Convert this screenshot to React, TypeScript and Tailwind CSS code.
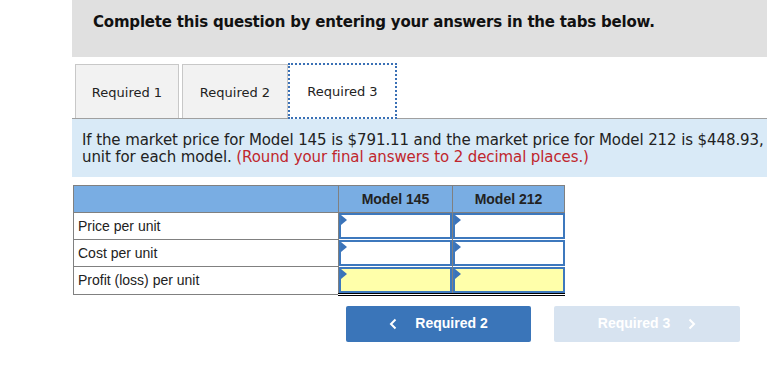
import React from 'react';

/**
 * Question tabs: header, tab strip, prompt and answer table
 */

const tahoma = { fontFamily: '"DejaVu Sans", Verdana, sans-serif' };
const arial = { fontFamily: '"Liberation Sans", Arial, sans-serif' };

const InputCell: React.FC<{ yellow?: boolean; last?: boolean }> = ({ yellow, last }) => (
  <td className={`p-0 border-l border-[#808080] ${last ? 'border-b-[3px] border-b-black border-double' : ''}`}>
    <div
      className={`relative h-[26px] border-2 border-[#3d78bd] ${yellow ? 'bg-[#ffffaa]' : 'bg-white'}`}
    >
      <span className="absolute left-0 top-0 w-0 h-0 border-t-[5px] border-b-[5px] border-l-[6px] border-t-transparent border-b-transparent border-l-[#3b73b9]" />
    </div>
  </td>
);

const rows = ['Price per unit', 'Cost per unit', 'Profit (loss) per unit'];

export default function App() {
  return (
    <div className="w-[767px] h-[385px] overflow-hidden bg-white">
      <div className="ml-[72px] w-[1000px]">
        {/* Header */}
        <div className="h-[57px] bg-[#e0e0e0] pl-[21px] pt-[11px]">
          <p className="text-[15px] font-bold text-[#111] tracking-[-0.2px]" style={tahoma}>
            Complete this question by entering your answers in the tabs below.
          </p>
        </div>

        {/* Tabs */}
        <div className="mt-[8px] flex items-end pl-[3px] border-b border-[#a0a0a0] h-[54px]">
          <div
            className="w-[104px] h-[54px] pt-[2px] flex items-center justify-center bg-[#f2f2f2] border border-b-0 border-[#c8c8c8] text-[13px] text-[#222]"
            style={tahoma}
          >
            Required 1
          </div>
          <div
            className="ml-[3px] w-[106px] h-[54px] pt-[2px] flex items-center justify-center bg-[#f2f2f2] border border-b-0 border-[#c8c8c8] text-[13px] text-[#222]"
            style={tahoma}
          >
            Required 2
          </div>
          <div
            className="w-[109px] h-[56px] -mb-px pt-[2px] flex items-center justify-center bg-white border-2 border-dotted border-[#3a70b5] text-[13px] text-[#222]"
            style={tahoma}
          >
            Required 3
          </div>
        </div>

        {/* Prompt */}
        <div className="h-[58px] bg-[#d9eaf7] pl-[10px] pt-[13px] text-[15px] leading-[17px] text-[#222] whitespace-nowrap tracking-[-0.1px]" style={tahoma}>
          <div>If the market price for Model 145 is $791.11 and the market price for Model 212 is $448.93, determine the profit or loss per</div>
          <div>
            unit for each model. <span className="text-[#c0262d]">(Round your final answers to 2 decimal places.)</span>
          </div>
        </div>

        {/* Answer table */}
        <table className="mt-[8px] ml-px border-collapse text-[13px] text-[#222]" style={arial}>
          <thead>
            <tr className="h-[27px] bg-[#79ade3]">
              <th className="w-[265px] border border-[#808080]" />
              <th className="w-[114px] border border-[#808080] font-bold text-[14px]">Model 145</th>
              <th className="w-[112px] border border-[#808080] font-bold text-[14px]">Model 212</th>
            </tr>
          </thead>
          <tbody>
            {rows.map((label, i) => (
              <tr key={label} className="h-[27px]">
                <td className="border border-[#808080] pl-[4px] text-left text-[14px]">{label}</td>
                <InputCell yellow={i === 2} last={i === 2} />
                <InputCell yellow={i === 2} last={i === 2} />
              </tr>
            ))}
          </tbody>
        </table>

        {/* Navigation */}
        <div className="mt-[10px] ml-[274px] flex gap-[23px]" style={arial}>
          <button className="w-[185px] h-[36px] rounded-[2px] bg-[#3a75b9] text-white font-bold text-[14px] flex items-center justify-center gap-[18px]">
            <svg width="8" height="12" viewBox="0 0 8 12" fill="none">
              <path d="M6.5 1.5 2 6l4.5 4.5" stroke="white" strokeWidth="2" />
            </svg>
            Required 2
          </button>
          <button className="w-[186px] h-[36px] rounded-[2px] bg-[#d7e3f0] text-white font-bold text-[14px] flex items-center justify-center gap-[18px]">
            Required 3
            <svg width="8" height="12" viewBox="0 0 8 12" fill="none">
              <path d="M1.5 1.5 6 6l-4.5 4.5" stroke="white" strokeWidth="2" />
            </svg>
          </button>
        </div>
      </div>
    </div>
  );
}
